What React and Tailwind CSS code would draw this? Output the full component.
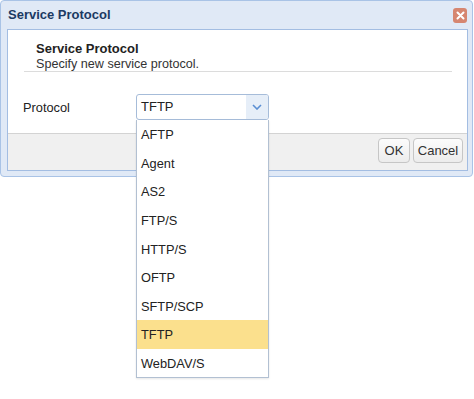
import React from "react";

const items = ["AFTP", "Agent", "AS2", "FTP/S", "HTTP/S", "OFTP", "SFTP/SCP", "TFTP", "WebDAV/S"];

export default function App() {
  return (
    <div className="relative w-[474px] h-[399px] bg-white font-['Liberation_Sans',Arial,sans-serif] text-[13px] text-[#222]">
      <div className="w-[473px] h-[177px] rounded-[4px] border border-[#a9c3e6] bg-[#e0e9f6] flex flex-col">
        <div className="h-[28px] flex items-center justify-between pl-[7px] pr-[5px]">
          <span className="font-bold text-[13px] text-[#1b3a63]">Service Protocol</span>
          <div className="w-[14px] h-[15px] rounded-[3px] bg-[#d68670] flex items-center justify-center">
            <svg width="9" height="9" viewBox="0 0 9 9">
              <path d="M1.5 1.5 L7.5 7.5 M7.5 1.5 L1.5 7.5" stroke="#fff" strokeWidth="2" strokeLinecap="round" />
            </svg>
          </div>
        </div>
        <div className="ml-[6px] mr-[4px] h-[142px] border border-[#a3bde2] bg-white flex flex-col">
          <div className="h-[103px] flex flex-col">
            <div className="mt-[12px] pl-[28px] leading-[14px]">
              <div className="font-bold text-[13px] text-[#222]">Service Protocol</div>
              <div className="mt-[1px] text-[12.6px] text-[#333]">Specify new service protocol.</div>
            </div>
            <div className="ml-[16px] mr-[15px] h-px bg-[#dcdcdc]" />
            <div className="mt-[22px] pl-[15px] flex items-center">
              <span className="w-[113px] text-[12.8px] text-[#222] pt-[1px]">Protocol</span>
              <div className="relative">
                <div className="w-[133px] h-[26px] rounded-[3px] border border-[#a6bcd9] bg-white flex items-stretch overflow-hidden">
                  <div className="flex-1 flex items-center pl-[4px] text-[13px] text-[#222]">TFTP</div>
                  <div className="w-[22px] bg-[#e6eef8] flex items-center justify-center">
                    <svg width="10" height="6" viewBox="0 0 10 6">
                      <path d="M1 1 L5 5 L9 1" stroke="#5b8fd3" strokeWidth="1.6" fill="none" />
                    </svg>
                  </div>
                </div>
                <div className="absolute left-0 top-[26px] w-[133px] z-10 border border-t-0 border-[#b2c0d2] bg-white shadow-[0_1px_2px_rgba(0,0,0,0.1)]">
                  {items.map((it) => (
                    <div
                      key={it}
                      className={
                        it === "TFTP"
                          ? "h-[28.6px] flex items-center pl-[4px] pt-[1px] bg-[#fbe08d] text-[12.8px] text-[#222]"
                          : "h-[28.6px] flex items-center pl-[4px] pt-[1px] text-[12.8px] text-[#222]"
                      }
                    >
                      {it}
                    </div>
                  ))}
                </div>
              </div>
            </div>
          </div>
          <div className="flex-1 border-t border-[#d3d3d3] bg-[#f0f0f0] flex items-start justify-end gap-[3px] pt-[4px] pr-[4px]">
            <button className="w-[32px] h-[25px] rounded-[4px] border border-[#c6c6c6] bg-gradient-to-b from-[#fcfcfc] to-[#ececec] text-[13px] text-[#333]">OK</button>
            <button className="w-[50px] h-[25px] rounded-[4px] border border-[#c6c6c6] bg-gradient-to-b from-[#fcfcfc] to-[#ececec] text-[13px] text-[#333]">Cancel</button>
          </div>
        </div>
      </div>
    </div>
  );
}
